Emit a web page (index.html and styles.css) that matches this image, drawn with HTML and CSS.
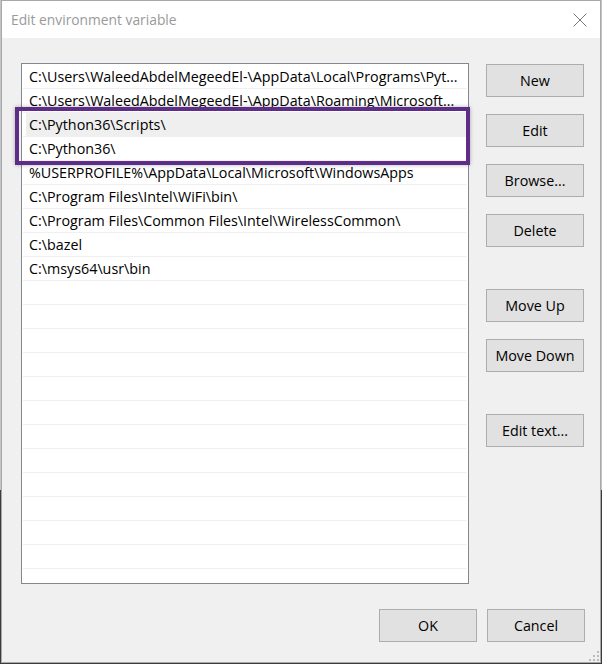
FILE: index.html
```html
<!DOCTYPE html>
<html>
<head>
<meta charset="utf-8">
<link rel="stylesheet" href="styles.css">
<title>Edit environment variable</title>
</head>
<body>
<div class="window">
  <div class="titlebar">
    <span class="title">Edit environment variable</span>
    <svg class="close" width="14" height="14" viewBox="0 0 14 14"><path d="M0.5 0.5 L13.5 13.5 M13.5 0.5 L0.5 13.5" stroke="#777" stroke-width="1" fill="none"/></svg>
  </div>
  <div class="client">
    <div class="main">
      <div class="listwrap">
        <div class="list">
          <div class="row">C:\Users\WaleedAbdelMegeedEl-\AppData\Local\Programs\Pyt...</div>
          <div class="row">C:\Users\WaleedAbdelMegeedEl-\AppData\Roaming\Microsoft...</div>
          <div class="row sel">C:\Python36\Scripts\</div>
          <div class="row">C:\Python36\</div>
          <div class="row">%USERPROFILE%\AppData\Local\Microsoft\WindowsApps</div>
          <div class="row">C:\Program Files\Intel\WiFi\bin\</div>
          <div class="row">C:\Program Files\Common Files\Intel\WirelessCommon\</div>
          <div class="row">C:\bazel</div>
          <div class="row">C:\msys64\usr\bin</div>
          <div class="row"></div>
          <div class="row"></div>
          <div class="row"></div>
          <div class="row"></div>
          <div class="row"></div>
          <div class="row"></div>
          <div class="row"></div>
          <div class="row"></div>
          <div class="row"></div>
          <div class="row"></div>
          <div class="row"></div>
          <div class="row"></div>
        </div>
        <div class="highlight"></div>
      </div>
      <div class="buttons">
        <div class="group">
          <button class="btn">New</button>
          <button class="btn">Edit</button>
          <button class="btn">Browse...</button>
          <button class="btn">Delete</button>
        </div>
        <div class="group">
          <button class="btn">Move Up</button>
          <button class="btn">Move Down</button>
        </div>
        <div class="group">
          <button class="btn">Edit text...</button>
        </div>
      </div>
    </div>
    <div class="footer">
      <button class="btn">OK</button>
      <button class="btn">Cancel</button>
    </div>
  </div>
  <svg class="grip" width="12" height="12" viewBox="0 0 12 12">
    <rect x="9" y="1" width="2" height="2" fill="#bcbcbc"/>
    <rect x="5" y="5" width="2" height="2" fill="#bcbcbc"/>
    <rect x="9" y="5" width="2" height="2" fill="#bcbcbc"/>
    <rect x="1" y="9" width="2" height="2" fill="#bcbcbc"/>
    <rect x="5" y="9" width="2" height="2" fill="#bcbcbc"/>
    <rect x="9" y="9" width="2" height="2" fill="#bcbcbc"/>
  </svg>
</div>
</body>
</html>
```
FILE: styles.css
```css
* { box-sizing: border-box; }
html, body { margin: 0; padding: 0; }
body {
  width: 602px;
  height: 664px;
  overflow: hidden;
  background: linear-gradient(#c4c4c4 0, #c4c4c4 490px, #3c3c3c 490px);
  font-family: "Open Sans", "Noto Sans", sans-serif;
  font-size: 14.3px;
  color: #000;
}
.window {
  position: relative;
  margin-left: 1px;
  width: 600px;
  height: 663px;
  border: 1px solid #a8a8a8;
  background: #f0f0f0;
  display: flex;
  flex-direction: column;
}
.titlebar {
  height: 37px;
  background: #fff;
  display: flex;
  align-items: center;
  justify-content: space-between;
  padding: 0 13px 0 9px;
  flex: none;
}
.title {
  color: #9a9a9a;
  font-size: 13.8px;
}
.close { display: block; }
.client {
  flex: 1;
  padding: 25px 15px 20px 19px;
  display: flex;
  flex-direction: column;
}
.main {
  display: flex;
  gap: 17px;
}
.listwrap {
  position: relative;
  width: 448px;
  height: 521px;
  flex: none;
}
.list {
  width: 100%;
  height: 100%;
  background: #fff;
  border: 1px solid #828790;
  padding: 1px 1px 0 1px;
  overflow: hidden;
}
.row {
  height: 24px;
  border-bottom: 1px solid #f0f0f0;
  padding: 0 2px 0 6px;
  line-height: 23px;
  white-space: nowrap;
  overflow: hidden;
}
.row.sel {
  background: linear-gradient(90deg, #fff 0, #fff 3px, #efefef 3px);
}
.highlight {
  position: absolute;
  left: -6px;
  top: 44px;
  width: 455px;
  height: 58px;
  border: 4px solid #5e2d88;
  box-shadow: 0 0 4px rgba(0, 0, 0, 0.3);
}
.buttons {
  padding-top: 1px;
  display: flex;
  flex-direction: column;
  gap: 42px;
}
.group {
  display: flex;
  flex-direction: column;
  gap: 17px;
}
.btn {
  width: 98px;
  height: 33px;
  background: #e1e1e1;
  border: 1px solid #adadad;
  font-family: inherit;
  font-size: 14.3px;
  color: #000;
  padding: 0;
  margin: 0;
  border-radius: 0;
}
.footer {
  margin-top: 25px;
  display: flex;
  justify-content: flex-end;
  gap: 10px;
}
.grip {
  position: absolute;
  right: 0;
  bottom: 0;
}
```
